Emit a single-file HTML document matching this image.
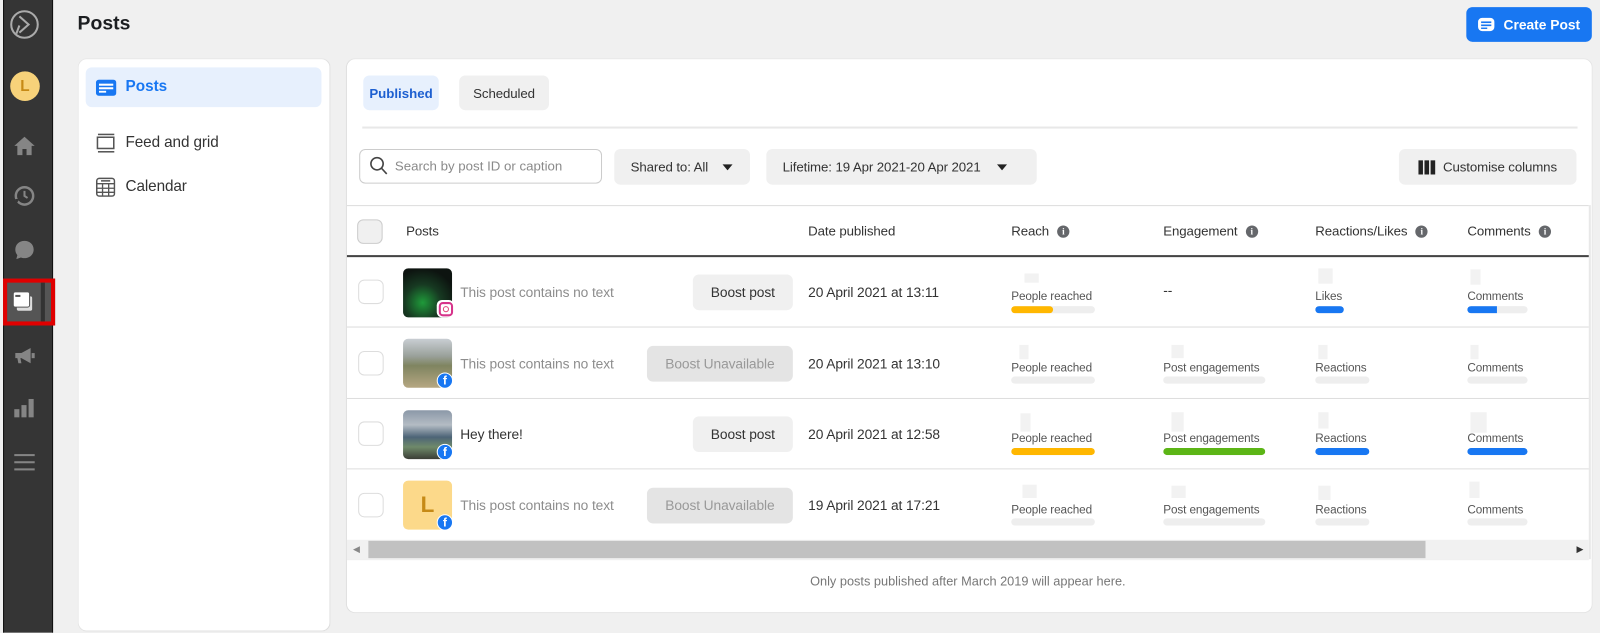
<!DOCTYPE html>
<html><head><meta charset="utf-8">
<style>
*{box-sizing:border-box;margin:0;padding:0}
html,body{width:1600px;height:615px;overflow:hidden;background:#f0f0f0;font-family:"Liberation Sans",Arial,sans-serif;color:#1c1e21}
#w{position:absolute;left:0;top:0;width:1568px;height:603px;transform:scale(1.0204);transform-origin:0 0}
.a{position:absolute}
.sb{left:3px;top:0;width:49px;height:620px;background:#353535;border-left:1px solid #111;border-right:1px solid #111}
.card{background:#fff;border-radius:8px;box-shadow:0 0 1px rgba(0,0,0,.15)}
.btn{background:#f0f0f0;border-radius:6px;font-size:13.5px;color:#333;display:flex;align-items:center;justify-content:center;letter-spacing:-0.1px}
.t14{font-size:13.5px;color:#333;letter-spacing:-0.1px}
.gray{color:#8d8d8d}
.lbl{font-size:11.5px;color:#555;letter-spacing:-0.1px}
.bar{height:7px;border-radius:4px;background:#eee;overflow:hidden}
.bar i{display:block;height:100%;border-radius:4px}
.ph{background:#f2f2f2}
.cb{width:25px;height:24px;border:1px solid #ddd;border-radius:6px;background:#fff}
.th{width:48px;height:48px;border-radius:5px}
.fb{width:16px;height:16px;border-radius:50%;background:#1877f2;border:1.5px solid #fff;color:#fff;font-weight:bold;font-size:12px;line-height:14px;text-align:center;font-family:"Liberation Sans",sans-serif}
.info{display:inline-block;width:12px;height:12px;border-radius:50%;background:#65676b;color:#fff;font-size:9px;font-weight:bold;line-height:12px;text-align:center;vertical-align:1px;margin-left:8px;font-family:"Liberation Serif",serif}
.hd{font-size:13px;color:#333;top:219px;letter-spacing:-0.1px}
</style></head><body><div id="w">

<div class="a sb"></div>
<svg class="a" style="left:8px;top:8px" width="32" height="32" viewBox="0 0 32 32"><circle cx="16" cy="16" r="13" fill="none" stroke="#aaa" stroke-width="2"/><path d="M8 25 L11 17 M11 8 L20 16 L11 24" fill="none" stroke="#aaa" stroke-width="2"/></svg>
<div class="a" style="left:10px;top:70px;width:29px;height:29px;border-radius:50%;background:#f7d27a;color:#c68a16;font-weight:bold;font-size:15px;text-align:center;line-height:29px">L</div>
<svg class="a" style="left:13px;top:132px" width="22" height="22" viewBox="0 0 22 22"><path d="M11 2 L21 11 H18 V20 H13 V14 H9 V20 H4 V11 H1 Z" fill="#858585"/></svg>
<svg class="a" style="left:13px;top:181px" width="22" height="22" viewBox="0 0 22 22"><circle cx="11" cy="11" r="8.5" fill="none" stroke="#858585" stroke-width="2.4"/><path d="M11 6 V11 L14 13" stroke="#858585" stroke-width="2" fill="none"/><path d="M2 14 L6 14 L3 19Z" fill="#353535"/></svg>
<svg class="a" style="left:13px;top:234px" width="22" height="22" viewBox="0 0 22 22"><path d="M11 2 C16 2 20 5.5 20 10.5 C20 15.5 16 19 11 19 C9.5 19 8.5 18.8 7.5 18.4 L3 20 L4 16 C2.7 14.5 2 12.6 2 10.5 C2 5.5 6 2 11 2Z" fill="#858585"/></svg>
<div class="a" style="left:3px;top:273px;width:51px;height:46px;border:4px solid #e00000;background:#555"></div>
<div class="a" style="left:40px;top:277px;width:4px;height:38px;background:#333"></div>
<svg class="a" style="left:11px;top:284px" width="24" height="24" viewBox="0 0 24 24"><rect x="5" y="6" width="16" height="15" rx="2" fill="#ddd" stroke="#555" stroke-width="1"/><rect x="2" y="2" width="16" height="15" rx="2" fill="#fff" stroke="#555" stroke-width="1"/><rect x="4" y="5" width="5" height="2" fill="#555"/></svg>
<svg class="a" style="left:13px;top:338px" width="22" height="22" viewBox="0 0 22 22"><path d="M2 8 H8 L17 3 V18 L8 13 H7 L8 18 H5 L4 13 H2Z" fill="#858585"/><rect x="18" y="8" width="3" height="5" fill="#858585"/></svg>
<svg class="a" style="left:13px;top:389px" width="22" height="22" viewBox="0 0 22 22"><rect x="1" y="12" width="5" height="8" fill="#858585"/><rect x="8" y="8" width="5" height="12" fill="#858585"/><rect x="15" y="2" width="5" height="18" fill="#858585"/></svg>
<svg class="a" style="left:13px;top:443px" width="22" height="20" viewBox="0 0 22 20"><rect x="1" y="2" width="20" height="2" fill="#858585"/><rect x="1" y="9" width="20" height="2" fill="#858585"/><rect x="1" y="16" width="20" height="2" fill="#858585"/></svg>

<div class="a" style="left:76px;top:13px;font-size:19px;font-weight:bold;color:#1c1e21">Posts</div>
<div class="a" style="left:1437px;top:7px;width:123px;height:34px;background:#1877f2;border-radius:6px;color:#fff;font-weight:bold;font-size:13.5px;display:flex;align-items:center;justify-content:center;gap:8px">
<svg width="17" height="14" viewBox="0 0 17 14"><rect x="0.5" y="0.5" width="16" height="13" rx="4" fill="#fff"/><rect x="3.5" y="4" width="10" height="1.6" fill="#1877f2"/><rect x="3.5" y="7" width="10" height="1.6" fill="#1877f2"/><rect x="3.5" y="10" width="6" height="1.4" fill="#1877f2"/></svg>Create Post</div>

<div class="a card" style="left:77px;top:58px;width:246px;height:560px"></div>
<div class="a" style="left:84px;top:66px;width:231px;height:39px;background:#e7f0fd;border-radius:6px"></div>
<svg class="a" style="left:94px;top:78px" width="20" height="16" viewBox="0 0 20 16"><rect x="0" y="0" width="20" height="16" rx="3" fill="#1877f2"/><rect x="3" y="4" width="14" height="2" fill="#fff"/><rect x="3" y="7.5" width="14" height="2" fill="#fff"/><rect x="3" y="11" width="7" height="1.8" fill="#fff"/></svg>
<div class="a" style="left:123px;top:76px;font-size:15px;font-weight:bold;color:#1877f2">Posts</div>
<svg class="a" style="left:94px;top:130px" width="20" height="21" viewBox="0 0 20 21"><rect x="2" y="1" width="16" height="1.5" fill="#555"/><rect x="1.5" y="4.5" width="16" height="11" fill="none" stroke="#555" stroke-width="1.5"/><rect x="2" y="18" width="16" height="1.5" fill="#555"/></svg>
<div class="a t14" style="left:123px;top:131px;font-size:15px">Feed and grid</div>
<svg class="a" style="left:94px;top:174px" width="19" height="19" viewBox="0 0 19 19"><rect x="0.8" y="0.8" width="17.4" height="17.4" rx="2.5" fill="none" stroke="#555" stroke-width="1.5"/><path d="M1 6 H18 M1 10.5 H18 M1 14.5 H18 M6.5 6 V18 M12.5 6 V18" stroke="#555" stroke-width="1.3"/><rect x="5" y="2.5" width="9" height="1.5" fill="#555"/></svg>
<div class="a t14" style="left:123px;top:174px;font-size:15px">Calendar</div>

<div class="a card" style="left:340px;top:58px;width:1220px;height:542px"></div>
<div class="a" style="left:356px;top:74px;width:74px;height:34px;background:#e7f0fd;border-radius:6px;color:#1d5fd0;font-weight:bold;font-size:13px;display:flex;align-items:center;justify-content:center">Published</div>
<div class="a btn" style="left:450px;top:74px;width:88px;height:34px;font-size:13px">Scheduled</div>
<div class="a" style="left:355px;top:124px;width:1191px;height:2px;background:#e8e8e8"></div>

<div class="a" style="left:352px;top:146px;width:238px;height:34px;border:1px solid #ccc;border-radius:6px"></div>
<svg class="a" style="left:362px;top:153px" width="18" height="19" viewBox="0 0 18 19"><circle cx="7.5" cy="7.5" r="6" fill="none" stroke="#444" stroke-width="1.6"/><path d="M12 12 L17 17.5" stroke="#444" stroke-width="1.6"/></svg>
<div class="a" style="left:387px;top:155px;font-size:13px;color:#8a8a8a">Search by post ID or caption</div>
<div class="a btn" style="left:602px;top:146px;width:133px;height:35px;justify-content:flex-start;padding-left:16px;font-size:13px">Shared to: All<svg style="margin-left:14px" width="10" height="6" viewBox="0 0 10 6"><path d="M0 0H10L5 6Z" fill="#222"/></svg></div>
<div class="a btn" style="left:751px;top:146px;width:265px;height:35px;justify-content:flex-start;padding-left:16px;font-size:13px">Lifetime: 19 Apr 2021-20 Apr 2021<svg style="margin-left:16px" width="10" height="6" viewBox="0 0 10 6"><path d="M0 0H10L5 6Z" fill="#222"/></svg></div>
<div class="a btn" style="left:1371px;top:146px;width:174px;height:35px;gap:7px;font-size:13px"><svg width="17" height="14" viewBox="0 0 17 14"><rect x="0" y="0" width="4.5" height="14" fill="#222"/><rect x="6" y="0" width="4.5" height="14" fill="#222"/><rect x="12" y="0" width="4.5" height="14" fill="#222"/></svg>Customise columns</div>

<div class="a" style="left:340px;top:201px;width:1217px;height:1px;background:#ddd"></div>
<div class="a" style="left:1557px;top:201px;width:2px;height:347px;background:#e8e8e8"></div>
<div class="a cb" style="left:350px;top:215px;background:#f0f0f0;border-color:#ccc"></div>
<div class="a hd" style="left:398px">Posts</div>
<div class="a hd" style="left:792px">Date published</div>
<div class="a hd" style="left:991px">Reach<span class="info">i</span></div>
<div class="a hd" style="left:1140px">Engagement<span class="info">i</span></div>
<div class="a hd" style="left:1289px">Reactions/Likes<span class="info">i</span></div>
<div class="a hd" style="left:1438px">Comments<span class="info">i</span></div>
<div class="a" style="left:340px;top:250px;width:1217px;height:1.5px;background:#444"></div>

<div class="a" style="left:340px;top:320px;width:1217px;height:1px;background:#ddd"></div>
<div class="a" style="left:340px;top:390px;width:1217px;height:1px;background:#ddd"></div>
<div class="a" style="left:340px;top:459px;width:1217px;height:1px;background:#ddd"></div>

<div class="a cb" style="left:351px;top:274px"></div>
<div class="a th" style="left:395px;top:263px;background:radial-gradient(circle at 40% 70%,#1f9a3a 0,#173a22 40%,#0d1410 75%)"></div>
<div class="a" style="left:428px;top:294px;width:17px;height:17px;border-radius:5px;background:#fff;padding:1.5px"><div style="width:14px;height:14px;border-radius:4px;border:2px solid #d6338a;position:relative"><div style="position:absolute;left:2px;top:2px;width:6px;height:6px;border-radius:50%;border:1.5px solid #e0457b"></div></div></div>
<div class="a t14 gray" style="left:451px;top:279px">This post contains no text</div>
<div class="a btn" style="left:679px;top:269px;width:98px;height:35px">Boost post</div>
<div class="a t14" style="left:792px;top:279px">20 April 2021 at 13:11</div>
<div class="a ph" style="left:1004px;top:268px;width:14px;height:9px"></div>
<div class="a lbl" style="left:991px;top:285px">People reached</div>
<div class="a bar" style="left:991px;top:300px;width:82px"><i style="width:41px;background:#ffb700"></i></div>
<div class="a t14" style="left:1140px;top:277px">--</div>
<div class="a ph" style="left:1292px;top:263px;width:14px;height:15px"></div>
<div class="a lbl" style="left:1289px;top:285px">Likes</div>
<div class="a bar" style="left:1289px;top:300px;width:28px"><i style="width:28px;background:#1877f2"></i></div>
<div class="a ph" style="left:1441px;top:264px;width:10px;height:15px"></div>
<div class="a lbl" style="left:1438px;top:285px">Comments</div>
<div class="a bar" style="left:1438px;top:300px;width:59px"><i style="width:29px;background:#1877f2;border-radius:4px 0 0 4px"></i></div>

<div class="a cb" style="left:351px;top:344px"></div>
<div class="a th" style="left:395px;top:332px;background:linear-gradient(#c9ced3 0,#9aa19b 35%,#7f8460 55%,#b6a782 100%)"></div>
<div class="a fb" style="left:428px;top:365px">f</div>
<div class="a t14 gray" style="left:451px;top:349px">This post contains no text</div>
<div class="a btn" style="left:634px;top:339px;width:143px;height:35px;background:#e4e4e4;color:#999">Boost Unavailable</div>
<div class="a t14" style="left:792px;top:349px">20 April 2021 at 13:10</div>
<div class="a ph" style="left:999px;top:338px;width:9px;height:14px"></div>
<div class="a lbl" style="left:991px;top:355px">People reached</div>
<div class="a bar" style="left:991px;top:369px;width:82px"></div>
<div class="a ph" style="left:1148px;top:338px;width:12px;height:13px"></div>
<div class="a lbl" style="left:1140px;top:355px">Post engagements</div>
<div class="a bar" style="left:1140px;top:369px;width:100px"></div>
<div class="a ph" style="left:1292px;top:338px;width:9px;height:14px"></div>
<div class="a lbl" style="left:1289px;top:355px">Reactions</div>
<div class="a bar" style="left:1289px;top:369px;width:53px"></div>
<div class="a ph" style="left:1441px;top:338px;width:8px;height:14px"></div>
<div class="a lbl" style="left:1438px;top:355px">Comments</div>
<div class="a bar" style="left:1438px;top:369px;width:59px"></div>

<div class="a cb" style="left:351px;top:413px"></div>
<div class="a th" style="left:395px;top:402px;background:linear-gradient(#8b98a7 0,#b4bcc4 30%,#4d6477 55%,#6f8a6a 75%,#3b3d36 100%)"></div>
<div class="a fb" style="left:428px;top:435px">f</div>
<div class="a t14" style="left:451px;top:418px">Hey there!</div>
<div class="a btn" style="left:679px;top:408px;width:98px;height:35px">Boost post</div>
<div class="a t14" style="left:792px;top:418px">20 April 2021 at 12:58</div>
<div class="a ph" style="left:1000px;top:405px;width:10px;height:18px"></div>
<div class="a lbl" style="left:991px;top:424px">People reached</div>
<div class="a bar" style="left:991px;top:439px;width:82px"><i style="width:100%;background:#ffb700"></i></div>
<div class="a ph" style="left:1148px;top:404px;width:12px;height:19px"></div>
<div class="a lbl" style="left:1140px;top:424px">Post engagements</div>
<div class="a bar" style="left:1140px;top:439px;width:100px"><i style="width:100%;background:#5cb516"></i></div>
<div class="a ph" style="left:1292px;top:404px;width:10px;height:16px"></div>
<div class="a lbl" style="left:1289px;top:424px">Reactions</div>
<div class="a bar" style="left:1289px;top:439px;width:53px"><i style="width:100%;background:#1877f2"></i></div>
<div class="a ph" style="left:1441px;top:404px;width:16px;height:20px"></div>
<div class="a lbl" style="left:1438px;top:424px">Comments</div>
<div class="a bar" style="left:1438px;top:439px;width:59px"><i style="width:100%;background:#1877f2"></i></div>

<div class="a cb" style="left:351px;top:483px"></div>
<div class="a th" style="left:395px;top:471px;background:#fcd98a;color:#c68a16;font-weight:bold;font-size:22px;text-align:center;line-height:48px">L</div>
<div class="a fb" style="left:428px;top:504px">f</div>
<div class="a t14 gray" style="left:451px;top:488px">This post contains no text</div>
<div class="a btn" style="left:634px;top:478px;width:143px;height:35px;background:#e4e4e4;color:#999">Boost Unavailable</div>
<div class="a t14" style="left:792px;top:488px">19 April 2021 at 17:21</div>
<div class="a ph" style="left:1002px;top:475px;width:14px;height:13px"></div>
<div class="a lbl" style="left:991px;top:494px">People reached</div>
<div class="a bar" style="left:991px;top:508px;width:82px"></div>
<div class="a ph" style="left:1148px;top:476px;width:14px;height:12px"></div>
<div class="a lbl" style="left:1140px;top:494px">Post engagements</div>
<div class="a bar" style="left:1140px;top:508px;width:100px"></div>
<div class="a ph" style="left:1292px;top:476px;width:12px;height:14px"></div>
<div class="a lbl" style="left:1289px;top:494px">Reactions</div>
<div class="a bar" style="left:1289px;top:508px;width:53px"></div>
<div class="a ph" style="left:1440px;top:472px;width:10px;height:16px"></div>
<div class="a lbl" style="left:1438px;top:494px">Comments</div>
<div class="a bar" style="left:1438px;top:508px;width:59px"></div>

<div class="a" style="left:340px;top:529px;width:1217px;height:19px;background:#f1f1f1"></div>
<div class="a" style="left:361px;top:530px;width:1036px;height:17px;background:#c1c1c1"></div>
<div class="a" style="left:346px;top:533px;font-size:9px;color:#888">&#9664;</div>
<div class="a" style="left:1545px;top:533px;font-size:9px;color:#333">&#9654;</div>
<div class="a" style="left:340px;top:548px;width:1217px;height:1px;background:#eee"></div>

<div class="a" style="left:340px;top:563px;width:1217px;text-align:center;font-size:12.5px;color:#777">Only posts published after March 2019 will appear here.</div>
</div></body></html>
